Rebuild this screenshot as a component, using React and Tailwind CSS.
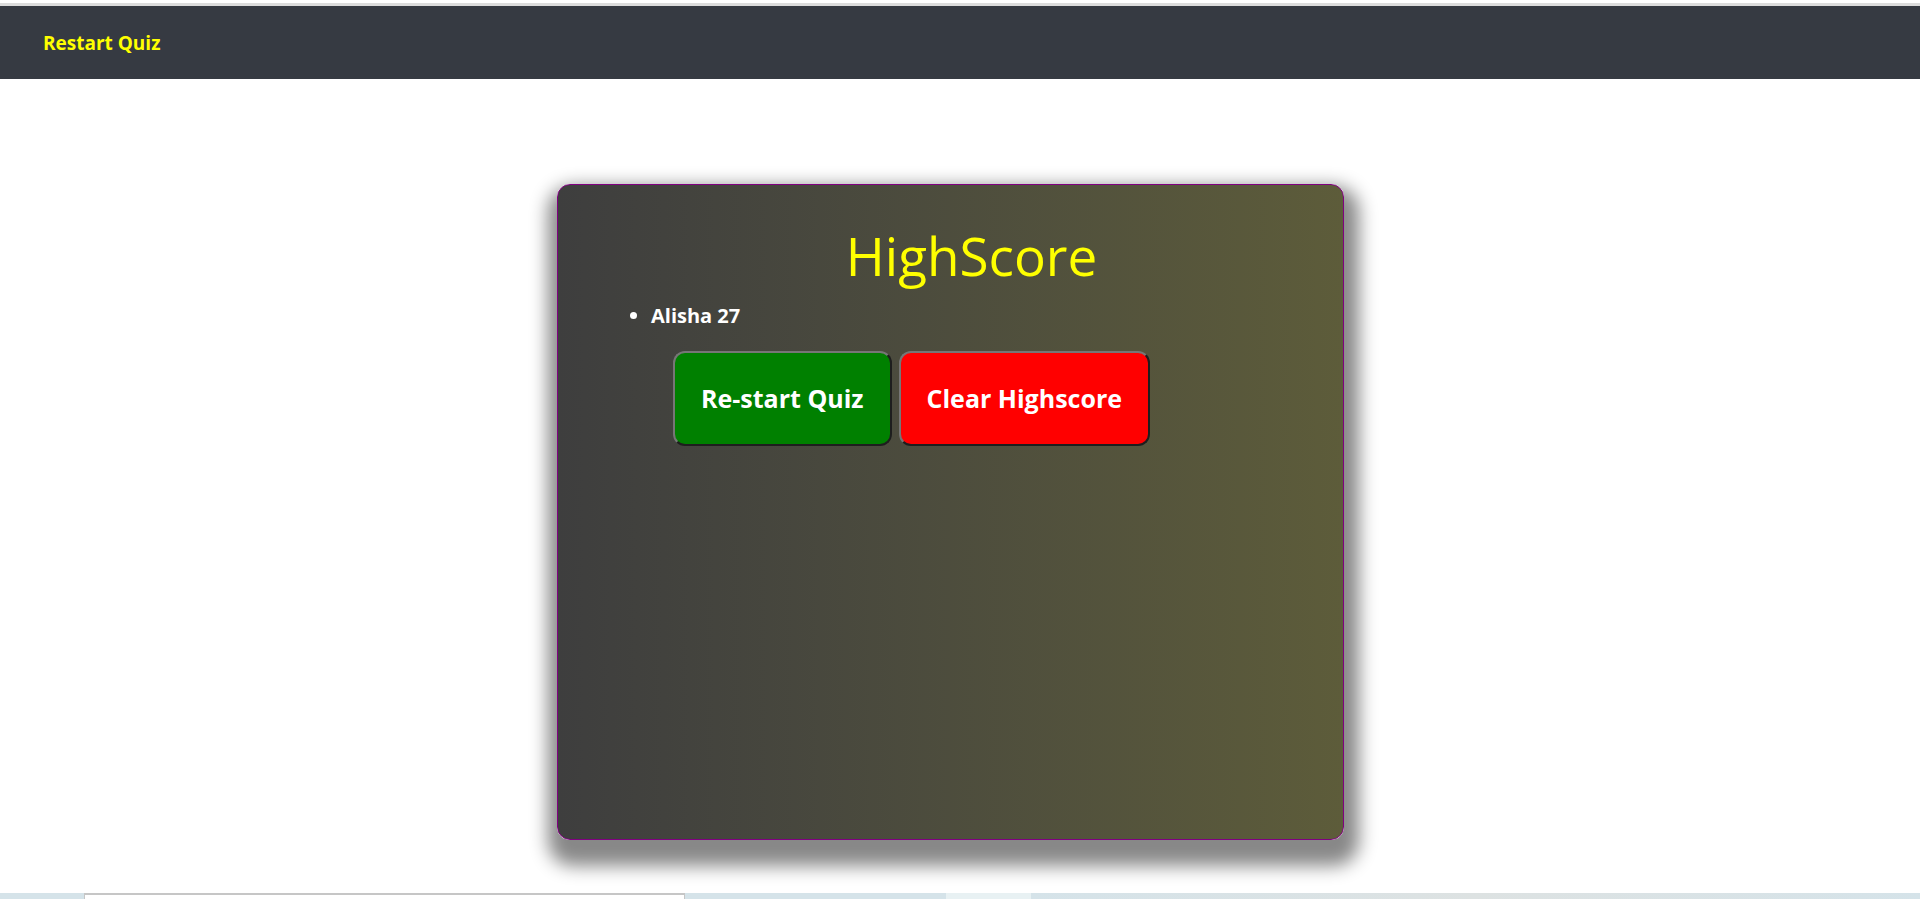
export default function App() {
  return (
    <div className="w-[1920px] h-[899px] overflow-hidden bg-white font-['Open_Sans','Noto_Sans',sans-serif]">
      {/* window top edge */}
      <div className="h-[3px] bg-white" />
      <div className="h-[3px] bg-[#dcdcdc]" />
      {/* top bar */}
      <header className="h-[73px] bg-[#363a42] flex items-center pl-[43px]">
        <a href="#" className="text-[#ffff00] text-[19px] font-bold leading-none mt-[2px]">
          Restart Quiz
        </a>
      </header>

      {/* highscore card */}
      <div className="mt-[105px] ml-[557px] w-[787px] h-[656px] rounded-[13px] border border-[#800080] bg-gradient-to-r from-[#3e3e3e] to-[#5d5c3a] shadow-[3px_14px_18px_12px_#888]">
        <h1 className="pt-[44px] pl-[42px] text-center text-[#ffff00] text-[53px] leading-none font-normal">
          HighScore
        </h1>
        <ul className="mt-[24px] ml-[53px] pl-[40px] list-disc text-white">
          <li className="text-[20px] font-bold leading-none">Alisha 27</li>
        </ul>
        <div className="mt-[25px] ml-[115px] flex gap-[7px]">
          <button className="h-[95px] px-[26px] rounded-[12px] border-2 border-t-[#767676] border-l-[#767676] border-b-[#1e1e1e] border-r-[#1e1e1e] bg-[#008000] text-white text-[25px] font-bold">
            Re-start Quiz
          </button>
          <button className="h-[95px] px-[26px] rounded-[12px] border-2 border-t-[#767676] border-l-[#767676] border-b-[#1e1e1e] border-r-[#1e1e1e] bg-[#ff0000] text-white text-[25px] font-bold">
            Clear Highscore
          </button>
        </div>
      </div>

      {/* bottom edge of the desktop behind */}
      <div className="mt-[53px] h-[6px] flex">
        <div className="w-[84px] bg-[#d5e3e9]" />
        <div className="w-[601px] bg-white border-t-2 border-x border-[#c6c6c6]" />
        <div className="w-[261px] bg-[#d5e3e9]" />
        <div className="w-[85px] bg-[#e8f1f3]" />
        <div className="flex-1 bg-gradient-to-r from-[#d5e3e9] via-[#dde2e2] to-[#d5e3e9]" />
      </div>
    </div>
  );
}
